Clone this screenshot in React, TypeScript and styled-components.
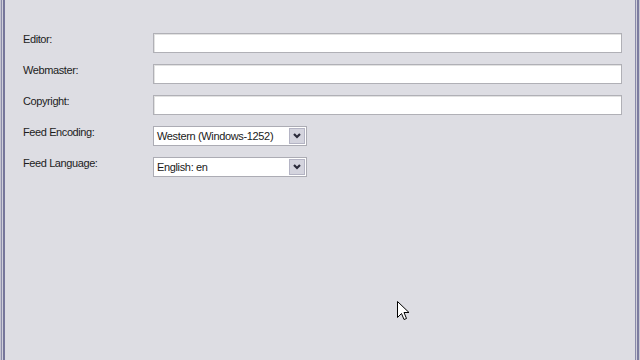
import React from "react";
import styled, { createGlobalStyle } from "styled-components";

const GlobalStyle = createGlobalStyle`
    html, body {
        margin: 0;
        padding: 0;
        width: 640px;
        height: 360px;
        overflow: hidden;
        background: #dddde3;
    }
`

const Window = styled.div`
    position: relative;
    width: 640px;
    height: 360px;
    box-sizing: border-box;
    background: #dddde3;
    font-family: "Liberation Sans", Arial, sans-serif;
    box-shadow:
        inset 1px 0 #c4c4d0,
        inset 2px 0 #8c8caa,
        inset 3px 0 #d0d0da,
        inset 5px 0 #76769a,
        inset -1px 0 #c8c8d2,
        inset -3px 0 #7c7ca0,
        inset -4px 0 #d0d0da,
        inset -5px 0 #8a8aaa;
`

const FormGrid = styled.div`
    display: grid;
    grid-template-columns: 130px 1fr;
    grid-auto-rows: 20px;
    row-gap: 11px;
    padding: 33px 18px 0 23px;
`

const Label = styled.label`
    font-size: 11px;
    line-height: 13px;
    letter-spacing: -0.4px;
    color: #1c1c1c;
    align-self: start;
`

const TextInput = styled.div`
    height: 20px;
    box-sizing: border-box;
    background: #ffffff;
    border: 1px solid #b0b0b6;
    box-shadow: inset 1px 1px 0 #e2e2e2;
`

const SelectBox = styled.div<{ $width: number }>`
    display: flex;
    width: ${(p) => p.$width}px;
    height: 20px;
    box-sizing: border-box;
    background: #ffffff;
    border: 1px solid #acacb4;
`

const SelectText = styled.span`
    flex: 1;
    font-size: 11px;
    line-height: 18px;
    letter-spacing: -0.35px;
    padding-left: 3px;
    color: #1a1a1a;
    white-space: nowrap;
`

const ArrowButton = styled.span`
    width: 16px;
    margin: 1px;
    box-sizing: border-box;
    display: flex;
    align-items: center;
    justify-content: center;
    background: #d4d4de;
    border: 1px solid #b4b4c4;
`

const Cursor = styled.svg`
    position: absolute;
    left: 397px;
    top: 301px;
`

function Chevron() {
    return (
        <svg width="8" height="6" viewBox="0 0 8 6">
            <path d="M1 1 L4 4 L7 1" fill="none" stroke="#2a2a3a" strokeWidth="2.2" />
        </svg>
    );
}

interface SelectProps {
    value: string;
    width: number;
}

function Select({ value, width }: SelectProps) {
    return (
        <SelectBox $width={width}>
            <SelectText>{value}</SelectText>
            <ArrowButton>
                <Chevron />
            </ArrowButton>
        </SelectBox>
    );
}

export default function App() {
    return (
        <>
            <GlobalStyle />
            <Window>
                <FormGrid>
                    <Label>Editor:</Label>
                    <TextInput />
                    <Label>Webmaster:</Label>
                    <TextInput />
                    <Label>Copyright:</Label>
                    <TextInput />
                    <Label>Feed Encoding:</Label>
                    <Select value="Western (Windows-1252)" width={154} />
                    <Label>Feed Language:</Label>
                    <Select value="English: en" width={154} />
                </FormGrid>
                <Cursor width="13" height="21" viewBox="0 0 13 21">
                    <path
                        d="M0.5 0.5 L0.5 16.5 L4.5 12.5 L7 18.5 L9.5 17.5 L7 11.5 L12 11.5 Z"
                        fill="#ffffff"
                        stroke="#000000"
                        strokeWidth="1"
                    />
                </Cursor>
            </Window>
        </>
    );
}
